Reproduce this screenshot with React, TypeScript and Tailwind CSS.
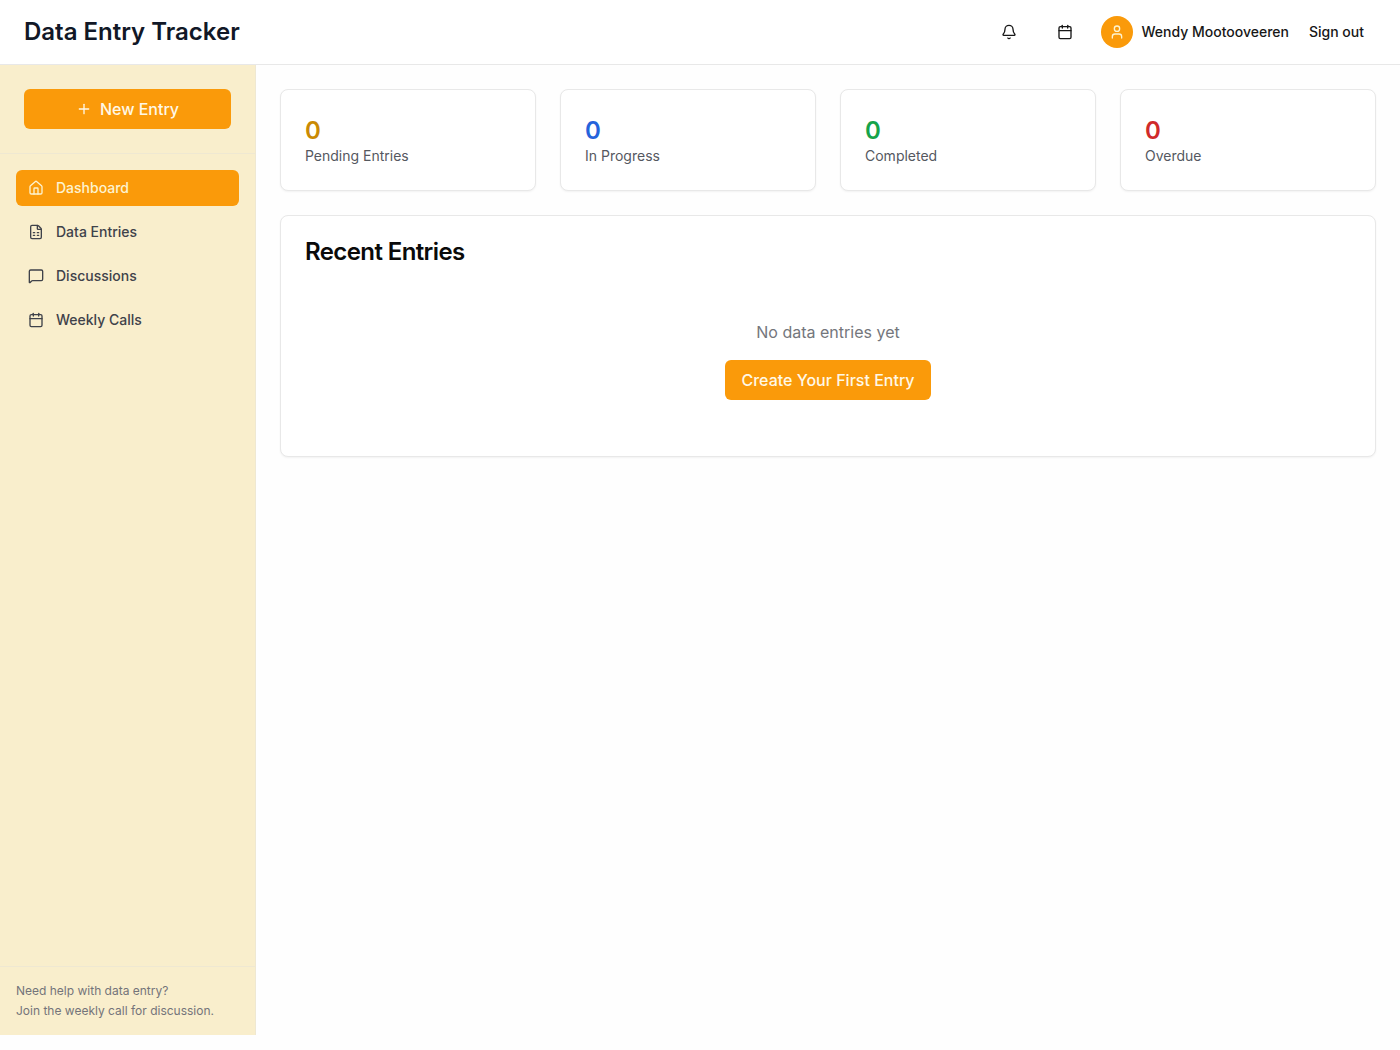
import { Bell, Calendar, FileSpreadsheet, Home, MessageSquare, Plus, User } from 'lucide-react'

const stats = [
  { label: 'Pending Entries', color: 'text-[#ca8a04]' },
  { label: 'In Progress', color: 'text-[#2563db]' },
  { label: 'Completed', color: 'text-[#16a34a]' },
  { label: 'Overdue', color: 'text-[#d02a2a]' },
]

const navItems = [
  { label: 'Dashboard', icon: Home, active: true },
  { label: 'Data Entries', icon: FileSpreadsheet, active: false },
  { label: 'Discussions', icon: MessageSquare, active: false },
  { label: 'Weekly Calls', icon: Calendar, active: false },
]

export default function App() {
  return (
    <div className="min-h-[1050px] bg-[#fefefe] font-['Inter',sans-serif] text-[#111827]">
      {/* Top bar */}
      <header className="flex h-[65px] items-center justify-between border-b border-[#e8e8e8] bg-white pl-6 pr-6">
        <h1 className="text-2xl font-semibold">Data Entry Tracker</h1>
        <div className="flex items-center text-[#171717]">
          <button className="flex h-10 w-10 items-center justify-center">
            <Bell size={16} />
          </button>
          <button className="ml-4 flex h-10 w-10 items-center justify-center">
            <Calendar size={16} />
          </button>
          <div className="ml-4 flex items-center gap-2">
            <div className="flex h-8 w-8 items-center justify-center rounded-full bg-[#fa9a0a] text-[#fdf3d0]">
              <User size={16} />
            </div>
            <span className="text-sm font-medium">Wendy Mootooveeren</span>
          </div>
          <button className="ml-2 h-10 px-3 text-sm font-medium">Sign out</button>
        </div>
      </header>

      <div className="flex">
        {/* Sidebar */}
        <aside className="flex h-[970px] w-64 flex-col border-r border-[#efe8d2] bg-[#f9eecc]">
          <div className="border-b border-[#efe8d2] p-6">
            <button className="flex h-10 w-full items-center justify-center gap-2 rounded-md bg-[#fa9a0a] text-base font-medium text-[#fff8e7]">
              <Plus size={16} />
              New Entry
            </button>
          </div>
          <nav className="flex flex-1 flex-col gap-2 p-4">
            {navItems.map((item) => (
              <a
                key={item.label}
                className={
                  item.active
                    ? 'flex h-9 items-center gap-3 rounded-md bg-[#fa9a0a] px-3 text-sm font-medium text-[#fdf3d0]'
                    : 'flex h-9 items-center gap-3 rounded-md px-3 text-sm font-medium text-[#3f424a]'
                }
              >
                <item.icon size={16} />
                {item.label}
              </a>
            ))}
          </nav>
          <div className="border-t border-[#efe8d2] px-4 py-3.5 text-xs leading-5 text-[#74747a]">
            <p>Need help with data entry?</p>
            <p>Join the weekly call for discussion.</p>
          </div>
        </aside>

        {/* Main content */}
        <main className="flex-1 p-6">
          <div className="grid grid-cols-4 gap-6">
            {stats.map((stat) => (
              <div key={stat.label} className="h-[102px] rounded-lg border border-[#e8e8e8] bg-white px-6 pt-6 shadow-xs">
                <div className={`pt-px text-2xl font-semibold leading-[31px] ${stat.color}`}>0</div>
                <div className="text-sm leading-5 text-[#55585f]">{stat.label}</div>
              </div>
            ))}
          </div>

          <section className="mt-6 h-[242px] rounded-lg border border-[#e8e8e8] bg-white px-6 pt-6 shadow-xs">
            <h2 className="text-2xl font-semibold leading-6 tracking-tight text-[#0a0a0a]">Recent Entries</h2>
            <div className="mt-14 flex flex-col items-center">
              <p className="text-base leading-6 text-[#74767c]">No data entries yet</p>
              <button className="mt-4 h-10 rounded-md bg-[#fa9a0a] px-4 text-base font-medium text-[#fff8e7]">
                Create Your First Entry
              </button>
            </div>
          </section>
        </main>
      </div>
    </div>
  )
}
